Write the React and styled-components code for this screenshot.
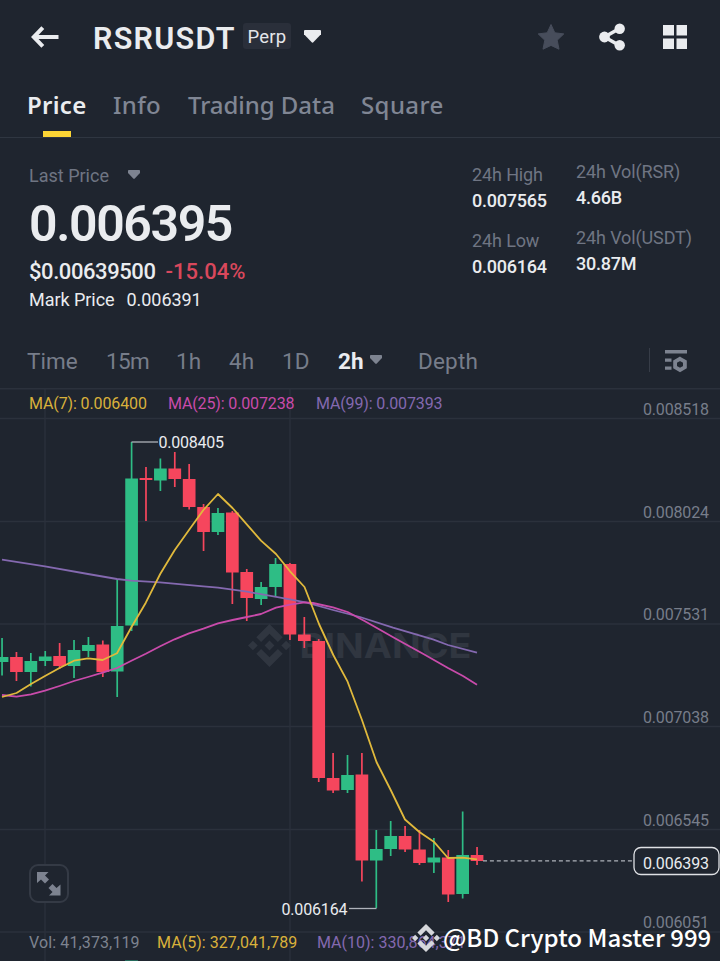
import React from "react";
import styled, { createGlobalStyle } from "styled-components";

const GlobalStyle = createGlobalStyle`
  * {
    box-sizing: border-box;
  }

  body {
    margin: 0;
    background: #1f252f;
  }
`;

const Screen = styled.div`
  width: 720px;
  height: 961px;
  overflow: hidden;

  display: flex;
  flex-direction: column;

  background: #1f252f;
  color: #eaecef;
  font-family: Roboto, "Liberation Sans", sans-serif;
  white-space: nowrap;
`;

const Header = styled.header`
  height: 74px;
  padding: 0 32px 0 30px;

  display: flex;
  align-items: center;
`;

const Symbol = styled.h1`
  width: 142px;
  margin: 3px 8px 0 33px;

  font-size: 30.5px;
  font-weight: 600;
  letter-spacing: 1.3px;
  line-height: 40px;
`;

const ContractTag = styled.span`
  width: 48px;
  height: 26px;
  margin-top: -2px;

  color: #e4e6ea;
  font-size: 18.5px;
  letter-spacing: 0.2px;
  line-height: 29px;
  text-align: center;

  background: #2a2f3a;
  border-radius: 3px;
`;

const Caret = styled.svg`
  flex: none;
  width: ${({ $size }) => $size}px;
  height: ${({ $size }) => $size * 0.75}px;
  margin: ${({ $margin }) => $margin};

  fill: ${({ $color }) => $color};
`;

const HeaderActions = styled.div`
  margin-left: auto;

  display: flex;
  align-items: center;
  gap: 36px;

  svg {
    display: block;
  }

  svg:first-child {
    margin-right: -3px;
  }
`;

const Tabs = styled.nav`
  height: 64px;
  padding-left: 27px;

  display: flex;

  border-bottom: 1px solid #2f3641;
`;

const Tab = styled.div`
  position: relative;
  width: ${({ $width }) => $width}px;
  margin-right: 27px;

  color: ${({ $active }) => ($active ? "#eaecef" : "#808694")};
  font-family: "Noto Sans", sans-serif;
  font-size: 24px;
  font-weight: ${({ $active }) => ($active ? 600 : 500)};
  letter-spacing: ${({ $spacing }) => $spacing}px;
  line-height: 61px;

  &::after {
    content: "";
    position: absolute;
    left: 16px;
    bottom: 0;

    display: ${({ $active }) => ($active ? "block" : "none")};
    width: 28px;
    height: 6px;

    background: #fcd535;
  }
`;

const Ticker = styled.section`
  height: 197px;
  padding: 21px 0 0 29px;

  display: flex;
`;

const PriceColumn = styled.div`
  width: 443px;
  padding-top: 5px;
`;

const PriceLabel = styled.div`
  display: flex;
  align-items: center;

  color: #6f7583;
  font-size: 18px;
  line-height: 24px;
`;

const LastPrice = styled.div`
  margin-top: 7px;

  font-size: 50px;
  font-weight: 600;
  letter-spacing: -1.4px;
  line-height: 58px;
`;

const FiatRow = styled.div`
  margin-top: 5px;

  display: flex;
  gap: 10px;

  font-size: 22px;
  font-weight: 500;
  letter-spacing: -0.42px;
  line-height: 28px;
`;

const Change = styled.span`
  color: #d9485c;
  letter-spacing: 0;
`;

const MarkRow = styled.div`
  margin-top: 1px;

  display: flex;
  gap: 12px;

  font-size: 18px;
  letter-spacing: -0.05px;
  line-height: 26px;
`;

const StatColumn = styled.div`
  width: 104px;
  margin-top: ${({ $offset }) => $offset}px;
`;

const Stat = styled.div`
  height: 66px;

  font-size: 18px;
  line-height: 26px;

  span {
    display: block;
    color: #6f7583;
    letter-spacing: -0.12px;
  }

  strong {
    display: block;
    font-weight: 500;
    letter-spacing: -0.25px;
  }
`;

const Intervals = styled.nav`
  height: 53px;
  padding: 0 0 2px 27px;

  display: flex;
  align-items: center;
`;

const Interval = styled.div`
  width: ${({ $width }) => $width}px;

  display: flex;
  align-items: center;

  color: ${({ $active }) => ($active ? "#eaecef" : "#777d8a")};
  font-size: 22.5px;
  font-weight: ${({ $active }) => ($active ? 700 : 400)};
  letter-spacing: ${({ $spacing }) => $spacing || 0}px;
  line-height: 30px;
`;

const Divider = styled.span`
  width: 1px;
  height: 24px;
  margin: -2px 15px 0 0;

  background: #373d48;
`;

const ChartArea = styled.section`
  position: relative;
  height: 573px;
`;

const ChartSvg = styled.svg`
  display: block;
  width: 720px;
  height: 573px;
`;

const AxisLabel = styled.text`
  fill: ${({ $bright }) => ($bright ? "#eaecef" : "#777d8a")};
  font-family: Roboto, sans-serif;
  font-size: 16px;
`;

const Legend = styled.div`
  position: absolute;
  left: 29px;
  top: ${({ $top }) => $top}px;

  display: flex;

  font-size: 16px;
  line-height: 20px;
`;

const LegendItem = styled.span`
  width: ${({ $width }) => $width}px;
  color: ${({ $color }) => $color};
  letter-spacing: ${({ $spacing }) => $spacing || 0}px;
`;

const ExpandButton = styled.button`
  position: absolute;
  left: 29px;
  top: 476px;

  width: 40px;
  height: 39px;
  padding: 0;

  display: grid;
  place-items: center;

  background: #1f252f;
  border: 2px solid #343a45;
  border-radius: 9px;
`;

const Credit = styled.div`
  position: absolute;
  left: 412px;
  bottom: 7px;

  display: flex;
  align-items: center;
  gap: 3px;

  color: #ffffff;
  font-family: "Noto Sans CJK SC", sans-serif;
  font-size: 24px;
  font-weight: 500;
  letter-spacing: 0.02px;
  line-height: 34px;

  span {
    margin-top: -2px;
  }
`;

const UP = "#2ebd85";
const DOWN = "#f6465d";
const YELLOW = "#d9b13b";
const PINK = "#c94bab";
const PURPLE = "#8469b0";

const tabs = [
  { label: "Price", width: 59, spacing: 0.3, active: true },
  { label: "Info", width: 48, spacing: 0.3 },
  { label: "Trading Data", width: 146, spacing: -0.05 },
  { label: "Square", width: 82, spacing: 0.4 },
];

// direction, high, body top, body bottom, low
const candles = [
  [1, 638, 657, 662, 675.5],
  [0, 652, 657, 672, 681],
  [1, 653, 661, 672, 686.5],
  [1, 651, 656.5, 661, 666],
  [0, 643, 656, 666, 669],
  [1, 640, 650, 666, 678],
  [1, 637, 645, 651, 657],
  [0, 640.5, 644.5, 672, 677],
  [1, 579, 626, 671.5, 697],
  [1, 442, 478.5, 625.5, 631],
  [0, 467, 478, 480, 521],
  [1, 458.5, 468.5, 480.5, 491],
  [0, 452, 468.5, 479, 487],
  [0, 464, 479, 507, 509.5],
  [0, 504, 507, 532, 551],
  [1, 508, 513, 532, 535],
  [0, 511, 512.5, 572.5, 604],
  [0, 569, 572, 598, 621],
  [1, 582, 587, 599, 605],
  [1, 558, 564, 587, 596],
  [0, 563, 564, 634.5, 640],
  [0, 617, 634.5, 641, 648],
  [0, 639, 641, 778, 782],
  [0, 753, 778, 790.5, 793],
  [1, 755, 775, 790, 793],
  [0, 753, 774.5, 860.5, 881.5],
  [1, 830, 849, 860.5, 908],
  [1, 821, 836, 849, 856],
  [0, 826, 836, 849.5, 852],
  [0, 830, 849.5, 863, 865],
  [1, 838, 857.5, 862.5, 873],
  [0, 850, 857.5, 894.5, 902],
  [1, 811.5, 855, 894, 898.5],
  [0, 847, 855, 861, 865],
];

const ma7 =
  "2,697 16.5,693 31,684 45,676 59.5,668 74,660.7 88,658.3 102.6,660 117,653.3 131.4,627.3 145.8,602.7 160.2,574 174.6,550.2 189,530 203.4,510 218,494 232.5,508 247,524.7 261,540.7 276,554 290,571.3 304.5,587 319,624 333.3,655 347.6,681.7 361.8,719.5 376.5,762 390.7,790 405,819.5 419.4,832 433.8,841.7 448,858 462.5,857.7 477,859.3";

const ma25 =
  "2,695 16.5,696.7 31,694.3 45,690.7 59.5,686 74,681 88,677 102.6,672.7 117,668 131.4,660.7 145.8,653.7 160.2,646.3 174.6,639.3 189,633.3 203.4,628.7 218,623.3 232.5,620 247,617 261,614 276,607.7 290,604.7 304.5,602.3 313,603 333,607.3 347.6,612 365,621.3 396.7,639.3 423,653.7 448,668 463,676 477,684.7";

const ma99 =
  "2,559.7 45,566.3 88,574 117,579 131.4,580.7 160,582.3 203.4,586.3 218,587.6 247,591.7 290,599.3 306.7,602.7 333,610 360,617 393,627.7 433,639.3 448,645 477,652.6";

const axis = [
  { value: "0.008518", y: 418.5 },
  { value: "0.008024", y: 521.5 },
  { value: "0.007531", y: 624 },
  { value: "0.007038", y: 726.5 },
  { value: "0.006545", y: 829.5 },
  { value: "0.006051", y: 932 },
];

function DownCaret({ size, color, margin }) {
  return (
    <Caret viewBox="0 0 16 12" $size={size} $color={color} $margin={margin}>
      <path d="M1 0h14q1 0 1 1v3L9 11.4q-1 1-2 0L0 4V1q0-1 1-1z" />
    </Caret>
  );
}

function BinanceMark({ x, y, size, color }) {
  return (
    <svg
      x={x}
      y={y}
      width={size}
      height={size}
      viewBox="0 0 126.6 126.6"
      fill={color}
    >
      <path d="M38.7 53.2 63.3 28.6l24.6 24.6 14.3-14.3L63.3 0 24.4 38.9zM0 63.3 14.3 49l14.3 14.3-14.3 14.3zM38.7 73.4 63.3 98l24.6-24.6 14.3 14.3-38.9 38.9-38.9-38.9zM98 63.3 112.3 49l14.3 14.3-14.3 14.3zM77.8 63.3 63.3 48.8 48.8 63.3l14.5 14.5z" />
    </svg>
  );
}

function PriceChart() {
  return (
    <ChartSvg viewBox="0 388 720 573">
      <g stroke="#2b313c" strokeWidth="1.3">
        <path d="M0 388.5H720" strokeWidth="2" />
        {axis.map((tick) => (
          <path key={tick.value} d={`M0 ${tick.y}H720`} />
        ))}
        <path d="M45 388V961M290 388V961" />
      </g>

      <BinanceMark x={248} y={624} size={43} color="#303640" />
      <text
        x="299.5"
        y="658"
        textLength="172"
        lengthAdjust="spacingAndGlyphs"
        fill="#303640"
        fontFamily="Inter, sans-serif"
        fontSize="34"
        fontWeight="700"
      >
        BINANCE
      </text>

      {candles.map(([up, high, top, bottom, low], i) => {
        const x = 2 + i * 14.394;
        return (
          <g key={i} fill={up ? UP : DOWN}>
            <rect x={x - 0.8} y={high} width="1.7" height={low - high} />
            <rect x={x - 6.3} y={top} width="12.7" height={bottom - top} />
          </g>
        );
      })}
      <rect x="125" y="960" width="13" height="1" fill="#24695a" />

      <g fill="none" strokeWidth="1.8" strokeLinejoin="round">
        <polyline points={ma99} stroke={PURPLE} />
        <polyline points={ma25} stroke={PINK} />
        <polyline points={ma7} stroke="#e0b93c" />
      </g>

      <g stroke="#aeb2ba" strokeWidth="1.3" fill="none">
        <path d="M131.5 442H158" />
        <path d="M349 908.5H376.5" />
        <path d="M483 860.8H633" strokeDasharray="4 2.9" />
        <rect
          x="634"
          y="847.5"
          width="85"
          height="27"
          rx="7"
          fill="#1f252f"
          stroke="#dfe1e5"
        />
      </g>

      <AxisLabel $bright x="158.5" y="447.7" textLength="65.5">
        0.008405
      </AxisLabel>
      <AxisLabel $bright x="281.5" y="914.5" textLength="66">
        0.006164
      </AxisLabel>
      <AxisLabel $bright x="643" y="869" textLength="66">
        0.006393
      </AxisLabel>
      {axis.map((tick) => (
        <AxisLabel
          key={tick.value}
          x="643"
          y={tick.y - 3.7}
          textLength="66"
        >
          {tick.value}
        </AxisLabel>
      ))}
    </ChartSvg>
  );
}

export default function App() {
  return (
    <Screen>
      <GlobalStyle />

      <Header>
        <svg width="30" height="24" viewBox="0 0 30 24" fill="none">
          <path
            d="M28.5 12H4M12.8 2.7 3.8 12l9 9.3"
            stroke="#eaecef"
            strokeWidth="4"
          />
        </svg>
        <Symbol>RSRUSDT</Symbol>
        <ContractTag>Perp</ContractTag>
        <DownCaret size={17} color="#eaecef" margin="-1px 0 0 13px" />

        <HeaderActions>
          <svg width="28" height="28" viewBox="0 0 28 28">
            <path
              d="m14 1.5 3.8 8.3 9 1.1-6.6 6.3 1.8 9L14 22.4 6 26.2l1.8-9L1.2 10.9l9-1.1z"
              fill="#474d5b"
              stroke="#474d5b"
              strokeLinejoin="round"
            />
          </svg>
          <svg width="28" height="28" viewBox="0 0 28 28" fill="#eaecef">
            <path
              d="M21.5 5.5 6.5 14l15 8.5"
              fill="none"
              stroke="#eaecef"
              strokeWidth="3.6"
            />
            <circle cx="21.7" cy="5.7" r="5.2" />
            <circle cx="6.5" cy="14" r="5.4" />
            <circle cx="21.7" cy="22.3" r="5.2" />
          </svg>
          <svg width="26" height="26" viewBox="0 0 26 26" fill="#eaecef">
            <path d="M1 1h11v10.5H1zM14.5 1H25v10.5H14.5zM1 14.5h11V25H1zM14.5 14.5H25V25H14.5z" />
          </svg>
        </HeaderActions>
      </Header>

      <Tabs>
        {tabs.map((tab) => (
          <Tab
            key={tab.label}
            $width={tab.width}
            $spacing={tab.spacing}
            $active={tab.active}
          >
            {tab.label}
          </Tab>
        ))}
      </Tabs>

      <Ticker>
        <PriceColumn>
          <PriceLabel>
            Last Price
            <DownCaret size={12} color="#7d8390" margin="-3px 0 0 19px" />
          </PriceLabel>
          <LastPrice>0.006395</LastPrice>
          <FiatRow>
            <span>$0.00639500</span>
            <Change>-15.04%</Change>
          </FiatRow>
          <MarkRow>
            <span>Mark Price</span>
            <span>0.006391</span>
          </MarkRow>
        </PriceColumn>

        <StatColumn $offset={3}>
          <Stat>
            <span>24h High</span>
            <strong>0.007565</strong>
          </Stat>
          <Stat>
            <span>24h Low</span>
            <strong>0.006164</strong>
          </Stat>
        </StatColumn>
        <StatColumn $offset={0}>
          <Stat>
            <span>24h Vol(RSR)</span>
            <strong>4.66B</strong>
          </Stat>
          <Stat>
            <span>24h Vol(USDT)</span>
            <strong>30.87M</strong>
          </Stat>
        </StatColumn>
      </Ticker>

      <Intervals>
        <Interval $width={79}>Time</Interval>
        <Interval $width={70} $spacing={-0.7}>
          15m
        </Interval>
        <Interval $width={53}>1h</Interval>
        <Interval $width={53}>4h</Interval>
        <Interval $width={56}>1D</Interval>
        <Interval $width={80} $active>
          2h
          <DownCaret size={12} color="#7d8390" margin="-3px 0 0 6px" />
        </Interval>
        <Interval $width={231} $spacing={0.2}>
          Depth
        </Interval>
        <Divider />
        <svg width="22" height="24" viewBox="0 0 22 24" fill="#7d8390">
          <path d="M0 1h22v3.5H0zM0 9.5h6.5v3.2H0zM0 17.5h6.5v3.2H0z" />
          <path
            d="m15 9.8 4.9 2.8v5.6L15 21l-4.9-2.8v-5.6z"
            fill="none"
            stroke="#7d8390"
            strokeWidth="3.8"
          />
        </svg>
      </Intervals>

      <ChartArea>
        <PriceChart />
        <Legend $top={6}>
          <LegendItem $width={139} $color={YELLOW} $spacing={-0.12}>
            MA(7): 0.006400
          </LegendItem>
          <LegendItem $width={148} $color={PINK} $spacing={-0.14}>
            MA(25): 0.007238
          </LegendItem>
          <LegendItem $width={130} $color={PURPLE} $spacing={-0.14}>
            MA(99): 0.007393
          </LegendItem>
        </Legend>
        <Legend $top={545}>
          <LegendItem $width={128} $color="#7d8390" $spacing={0.12}>
            Vol: 41,373,119
          </LegendItem>
          <LegendItem $width={160} $color={YELLOW} $spacing={0.04}>
            MA(5): 327,041,789
          </LegendItem>
          <LegendItem $width={150} $color={PURPLE}>
            MA(10): 330,864,371
          </LegendItem>
        </Legend>
        <ExpandButton aria-label="Expand chart">
          <svg width="24" height="24" viewBox="0 0 24 24" fill="#7d8390">
            <path d="M0 0h11.5L8 3.5l4 4L8 11.5l-4-4L0 11z" />
            <path d="M23.5 23.5H12l3.5-3.5-4-4 4-4 4 4 4-3.5z" />
          </svg>
        </ExpandButton>
        <Credit>
          <BinanceMark size={28} color="#d6d8dc" />
          <span>@BD Crypto Master 999</span>
        </Credit>
      </ChartArea>
    </Screen>
  );
}
